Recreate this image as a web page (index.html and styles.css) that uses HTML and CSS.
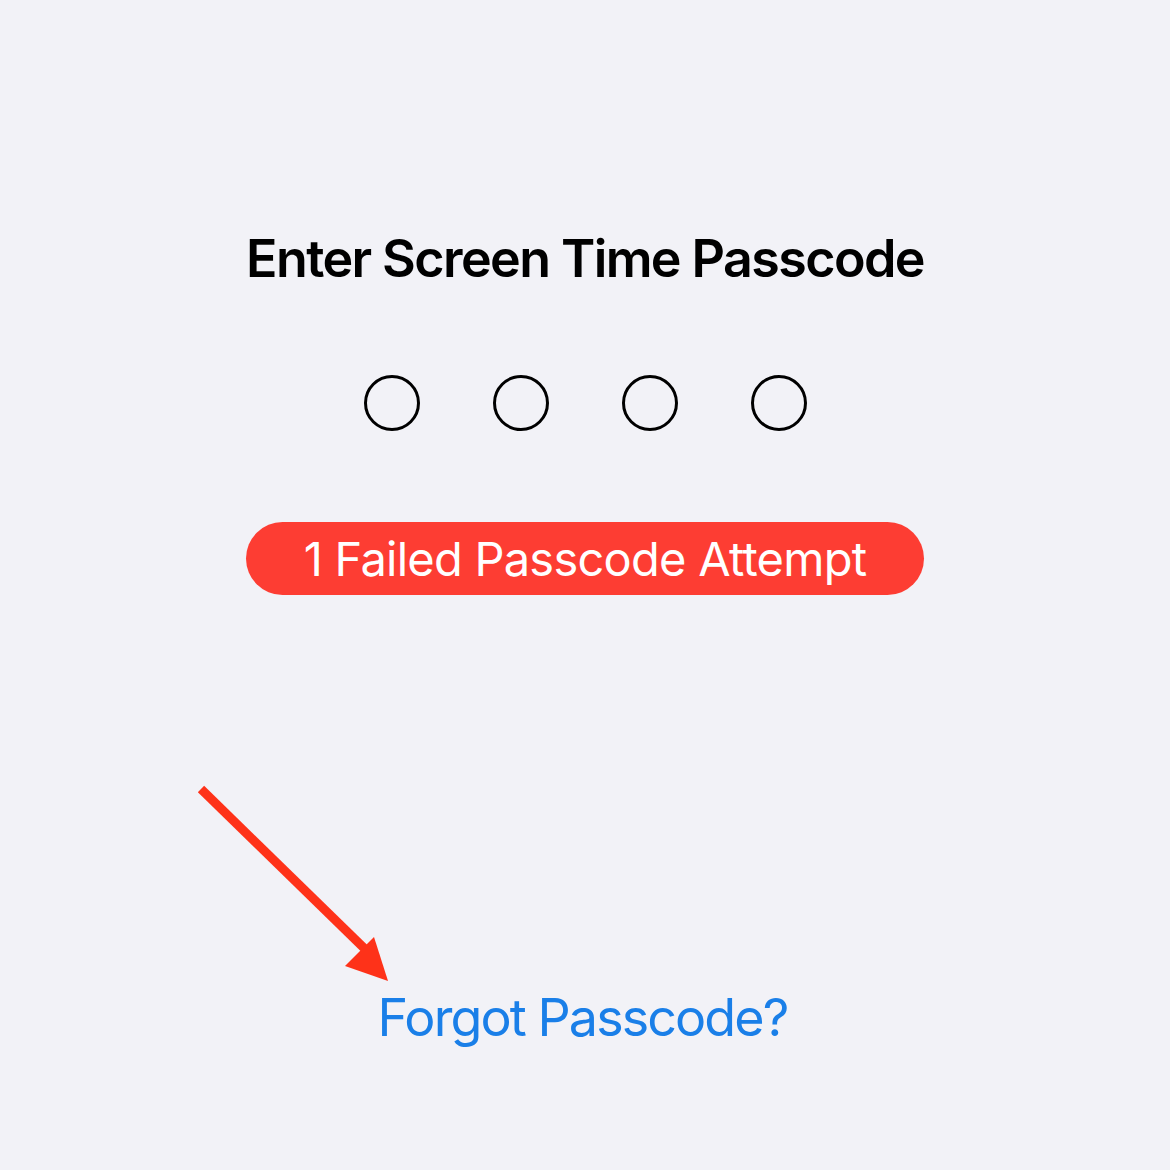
FILE: index.html
```html
<!DOCTYPE html>
<html lang="en">
<head>
  <meta charset="UTF-8" />
  <meta name="viewport" content="width=device-width, initial-scale=1.0" />
  <title>Screen Time Passcode</title>
  <link rel="stylesheet" href="styles.css">
</head>
<body>
  <div class="screen">
    <h1 class="title">Enter Screen Time Passcode</h1>
    <div class="dots">
      <span class="dot"></span>
      <span class="dot"></span>
      <span class="dot"></span>
      <span class="dot"></span>
    </div>
    <div class="failed">1 Failed Passcode Attempt</div>
    <a class="forgot" href="#">Forgot Passcode?</a>

    <!-- annotation arrow drawn over the screenshot -->
    <svg class="arrow" width="1170" height="1170" viewBox="0 0 1170 1170">
      <line x1="201" y1="789" x2="366" y2="950" stroke="#fe3219" stroke-width="9" />
      <polygon points="345,966 374,937 388,981" fill="#fe3219" />
    </svg>
  </div>
</body>
</html>
```

FILE: styles.css
```css
body {
  margin: 0;
  background: #f2f2f7;
  font-family: Inter, "Noto Sans", sans-serif;
}
.screen {
  position: relative;
  width: 1170px;
  height: 1170px;
  display: flex;
  flex-direction: column;
  align-items: center;
  box-sizing: border-box;
  padding-top: 228px;
}
.title {
  margin: 0 0 0 0;
  font-size: 52px;
  line-height: 62px;
  font-weight: 600;
  color: #000;
  letter-spacing: -1.6px;
}
.dots {
  display: flex;
  gap: 73px;
  margin-top: 85px;
}
.dot {
  width: 56px;
  height: 56px;
  border: 3.5px solid #000;
  border-radius: 50%;
  box-sizing: border-box;
}
.failed {
  margin-top: 91px;
  width: 678px;
  height: 73px;
  border-radius: 37px;
  background: #fd3d33;
  color: #fff;
  font-size: 47px;
  line-height: 73px;
  text-align: center;
  letter-spacing: -0.75px;
}
.forgot {
  margin-top: 390px;
  margin-left: -5px;
  font-size: 52px;
  line-height: 65px;
  color: #1a7fe8;
  text-decoration: none;
  letter-spacing: -1.9px;
}
.arrow {
  position: absolute;
  left: 0;
  top: 0;
  pointer-events: none;
}
```
